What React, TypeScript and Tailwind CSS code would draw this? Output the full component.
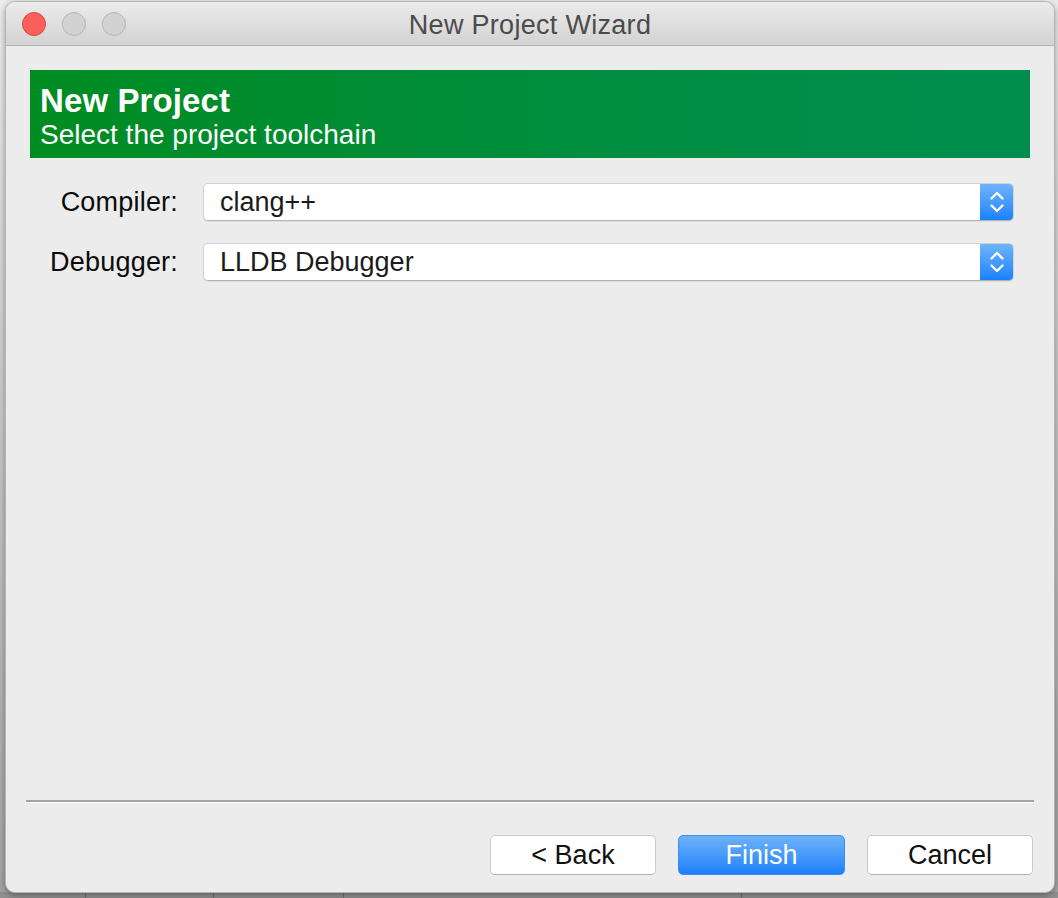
import React from "react";

const font = { fontFamily: '"Liberation Sans", Arial, Helvetica, sans-serif' };

function Chevrons() {
  return (
    <svg width="16" height="26" viewBox="0 0 16 26" fill="none">
      <polyline points="2.5,9.5 8,4 13.5,9.5" stroke="white" strokeWidth="2.4" strokeLinecap="round" strokeLinejoin="round" />
      <polyline points="2.5,16.5 8,22 13.5,16.5" stroke="white" strokeWidth="2.4" strokeLinecap="round" strokeLinejoin="round" />
    </svg>
  );
}

function Select({ value }: { value: string }) {
  return (
    <div className="flex-1 h-[38px] flex rounded-[5px] bg-white border border-[#d2d2d2] border-b-[#b4b4b4] shadow-[0_1px_0_rgba(0,0,0,0.06)] overflow-hidden">
      <div className="flex-1 flex items-center pl-[16px] pt-[1px] text-[27px] text-[#1b1b1b] leading-none">{value}</div>
      <div className="w-[33px] flex items-center justify-center bg-gradient-to-b from-[#6db4fb] to-[#1681fb]">
        <Chevrons />
      </div>
    </div>
  );
}

function Row({ label, value }: { label: string; value: string }) {
  return (
    <div className="flex items-center gap-[25px]">
      <div className="w-[148px] text-right text-[27px] text-[#0b0b0b] leading-none tracking-[0.2px]">{label}</div>
      <Select value={value} />
    </div>
  );
}

export default function App() {
  return (
    <div
      className="w-[1058px] h-[898px] relative overflow-hidden bg-gradient-to-b from-[#ececec] via-[#c6c6c6] to-[#a2a2a2]"
      style={font}
    >
      {/* desktop strip under the window */}
      <div className="absolute left-0 right-0 bottom-0 h-[6px] bg-[#8f8f8f] flex">
        <div className="w-[86px] border-r border-[#6f6f6f]" />
        <div className="w-[128px] border-r border-[#6f6f6f]" />
        <div className="w-[130px] border-r border-[#6f6f6f]" />
        <div className="w-[398px] border-r border-[#6f6f6f]" />
      </div>

      <div className="relative ml-[5px] mt-[1px] w-[1050px] h-[892px] rounded-[10px] border border-[#b5b5b5] bg-[#ececec] flex flex-col overflow-hidden shadow-[0_2px_6px_rgba(0,0,0,0.35)]">
        {/* title bar */}
        <div className="h-[44px] shrink-0 relative flex items-center bg-gradient-to-b from-[#ebebeb] to-[#d3d3d3] border-b border-[#b3b3b3]">
          <div className="flex items-center gap-[16px] pl-[16px] pt-[1px]">
            <div className="w-[24px] h-[24px] rounded-full bg-[#fc605c] border border-[#e0443e]" />
            <div className="w-[24px] h-[24px] rounded-full bg-[#d2d2d2] border border-[#b4b4b4]" />
            <div className="w-[24px] h-[24px] rounded-full bg-[#d2d2d2] border border-[#b4b4b4]" />
          </div>
          <div className="absolute inset-0 flex items-center justify-center pt-[3px] text-[27px] text-[#4b4b4b] leading-none tracking-[0.3px]">
            New Project Wizard
          </div>
        </div>

        {/* banner */}
        <div className="mt-[24px] mx-[24px] h-[88px] shrink-0 bg-gradient-to-r from-[#008c20] to-[#008e50] pl-[10px] pt-[14px] text-white">
          <div className="text-[33px] font-bold leading-[33px] tracking-[0.1px]">New Project</div>
          <div className="mt-[4px] text-[28px] leading-[28px]">Select the project toolchain</div>
        </div>

        {/* form */}
        <div className="mt-[25px] pl-[24px] pr-[40px] flex flex-col gap-[22px]">
          <Row label="Compiler:" value="clang++" />
          <Row label="Debugger:" value="LLDB Debugger" />
        </div>

        <div className="flex-1" />

        {/* separator */}
        <div className="mx-[20px] h-[2px] bg-[#a2a2a2]" />
        <div className="mx-[20px] h-[1px] bg-white" />

        {/* buttons */}
        <div className="mt-[32px] mb-[17px] pr-[21px] flex justify-end gap-[22px]">
          <button className="w-[166px] h-[40px] rounded-[5px] bg-white border border-[#cacaca] border-b-[#b0b0b0] pt-[1px] text-[27px] text-[#111] leading-none">
            &lt; Back
          </button>
          <button className="w-[167px] h-[40px] rounded-[5px] bg-gradient-to-b from-[#6cb2f9] to-[#1a7ffb] border border-[#3d8ef2] pt-[1px] text-[27px] text-white leading-none">
            Finish
          </button>
          <button className="w-[166px] h-[40px] rounded-[5px] bg-white border border-[#cacaca] border-b-[#b0b0b0] pt-[1px] text-[27px] text-[#111] leading-none">
            Cancel
          </button>
        </div>
      </div>
    </div>
  );
}
